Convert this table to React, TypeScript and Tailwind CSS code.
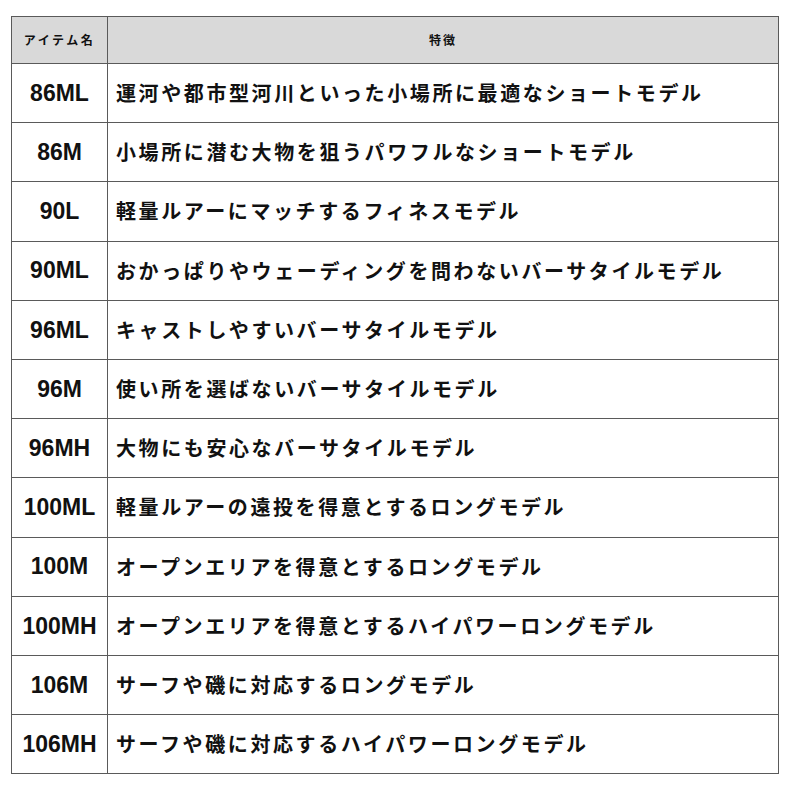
import React from "react";

const rows: [string, string][] = [
  ["86ML", "運河や都市型河川といった小場所に最適なショートモデル"],
  ["86M", "小場所に潜む大物を狙うパワフルなショートモデル"],
  ["90L", "軽量ルアーにマッチするフィネスモデル"],
  ["90ML", "おかっぱりやウェーディングを問わないバーサタイルモデル"],
  ["96ML", "キャストしやすいバーサタイルモデル"],
  ["96M", "使い所を選ばないバーサタイルモデル"],
  ["96MH", "大物にも安心なバーサタイルモデル"],
  ["100ML", "軽量ルアーの遠投を得意とするロングモデル"],
  ["100M", "オープンエリアを得意とするロングモデル"],
  ["100MH", "オープンエリアを得意とするハイパワーロングモデル"],
  ["106M", "サーフや磯に対応するロングモデル"],
  ["106MH", "サーフや磯に対応するハイパワーロングモデル"],
];

export default function App() {
  return (
    <div className="w-[800px] h-[800px] bg-white pl-[11px] pt-[16px]" style={{ fontFamily: '"Noto Sans CJK JP", sans-serif' }}>
      <table className="w-[768px] border-collapse table-fixed text-[#111]">
        <colgroup>
          <col className="w-[96px]" />
          <col />
        </colgroup>
        <thead>
          <tr className="h-[47px] bg-[#d9d9d9]">
            <th className="border border-[#5a5a5a] text-[12px] font-bold tracking-[2.5px] text-center p-0">アイテム名</th>
            <th className="border border-[#5a5a5a] text-[12px] font-bold tracking-[2px] text-center p-0">特徴</th>
          </tr>
        </thead>
        <tbody>
          {rows.map(([m, d]) => (
            <tr key={m} className="h-[59.2px]">
              <td
                className="border border-[#5a5a5a] text-center text-[23px] font-bold p-0"
                style={{ fontFamily: '"Liberation Sans", Arial, sans-serif' }}
              >
                {m}
              </td>
              <td className="border border-[#5a5a5a] text-[20px] font-bold tracking-[2.6px] pl-[8px] whitespace-nowrap">
                {d}
              </td>
            </tr>
          ))}
        </tbody>
      </table>
    </div>
  );
}
